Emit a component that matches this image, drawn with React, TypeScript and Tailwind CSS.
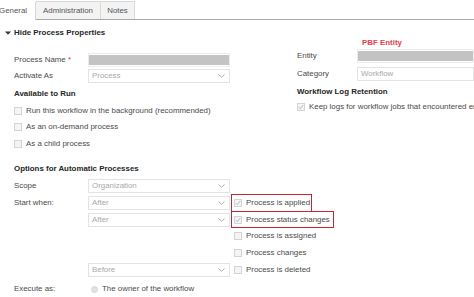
import React from "react";

const font = { fontFamily: '"Liberation Sans", Arial, sans-serif' };

function Chevron() {
  return (
    <svg width="7" height="4" viewBox="0 0 7 4" className="shrink-0">
      <path d="M0.5 0.5 L3.5 3.3 L6.5 0.5" fill="none" stroke="#9a9a9a" strokeWidth="0.8" />
    </svg>
  );
}

function SelectBox({ value, width = "w-[142px]" }: { value: string; width?: string }) {
  return (
    <div
      className={`${width} h-[14px] border border-[#e3e3e3] bg-white flex items-center justify-between pl-[3px] pr-[4px] text-[#a8a8a8]`}
    >
      <span>{value}</span>
      <Chevron />
    </div>
  );
}

function Redacted({ width }: { width: string }) {
  return (
    <div className={`${width} h-[14px] border border-[#ececec] bg-white flex items-center`}>
      <div className="w-full h-[10px] bg-[#c3c3c3]" />
    </div>
  );
}

function Checkbox({ checked = false }: { checked?: boolean }) {
  return (
    <span className="w-[8px] h-[8px] shrink-0 border border-[#d4d4d4] bg-[#f4f4f4] flex items-center justify-center">
      {checked && (
        <svg width="6" height="6" viewBox="0 0 6 6">
          <path d="M0.8 3.2 L2.3 4.7 L5.2 1.2" fill="none" stroke="#b5b5b5" strokeWidth="1" />
        </svg>
      )}
    </span>
  );
}

function CheckRow({ label, checked = false, className = "" }: { label: string; checked?: boolean; className?: string }) {
  return (
    <div className={`h-[14px] flex items-center gap-[4px] whitespace-nowrap ${className}`}>
      <Checkbox checked={checked} />
      <span>{label}</span>
    </div>
  );
}

interface TriggerRow {
  label?: string;
  select?: string;
  check: string;
  checked?: boolean;
  boxed?: string;
}

const triggers: TriggerRow[] = [
  { label: "Start when:", select: "After", check: "Process is applied", checked: true, boxed: "w-[81px] h-[18px]" },
  { select: "After", check: "Process status changes", checked: true, boxed: "w-[103px] h-[17px]" },
  { check: "Process is assigned" },
  { check: "Process changes" },
  { select: "Before", check: "Process is deleted" },
];

export default function App() {
  return (
    <div
      className="w-[474px] h-[297px] overflow-hidden bg-white text-[7.9px] leading-none text-[#4a4a4a]"
      style={font}
    >
      {/* tabs */}
      <div className="h-[20px] flex items-end border-b border-[#a9a9a9]">
        <div className="w-[36px] h-[18px] bg-white flex items-center border-r border-[#d6d6d6] -mb-px text-[#555] overflow-hidden">
          <span className="-ml-[1px]">General</span>
        </div>
        <div className="w-[65px] h-[18px] bg-[#f3f3f3] border-t border-r border-[#d9d9d9] flex items-center justify-center text-[#555]">
          Administration
        </div>
        <div className="w-[34px] h-[18px] bg-[#f3f3f3] border-t border-r border-[#d9d9d9] flex items-center justify-center text-[#555]">
          Notes
        </div>
      </div>

      {/* section header */}
      <div className="h-[13px] mt-[6px] flex items-center pl-[5px] gap-[3px] font-bold text-[#262626]">
        <svg width="6" height="4" viewBox="0 0 6 4">
          <path d="M0 0.5 L6 0.5 L3 3.8 Z" fill="#333" />
        </svg>
        <span>Hide Process Properties</span>
      </div>

      {/* two columns */}
      <div className="flex">
        <div className="w-[297px] shrink-0 pl-[14px] pt-[12px]">
          <div className="h-[17px] flex items-center">
            <span className="w-[74px]">
              Process Name <span className="text-[#d4213d]">*</span>
            </span>
            <Redacted width="w-[142px]" />
          </div>
          <div className="h-[14px] mt-[1px] flex items-center">
            <span className="w-[74px]">Activate As</span>
            <SelectBox value="Process" />
          </div>
          <div className="h-[14px] mt-[4px] flex items-center font-bold text-[#262626]">Available to Run</div>
          <CheckRow label="Run this workflow in the background (recommended)" className="mt-[3px]" />
          <CheckRow label="As an on-demand process" className="mt-[2px]" />
          <CheckRow label="As a child process" className="mt-[3px]" />
        </div>

        <div className="flex-1 min-w-0">
          <div className="h-[7px] flex items-center pl-[65px] font-bold text-[#e5404d] whitespace-nowrap">PBF Entity</div>
          <div className="h-[14px] mt-[3px] flex items-center">
            <span className="w-[60px] shrink-0">Entity</span>
            <Redacted width="flex-1" />
          </div>
          <div className="h-[14px] mt-[4px] flex items-center">
            <span className="w-[60px] shrink-0">Category</span>
            <div className="flex-1 h-[14px] border border-[#e3e3e3] flex items-center pl-[3px] text-[#a8a8a8]">Workflow</div>
          </div>
          <div className="h-[14px] mt-[4px] flex items-center font-bold text-[#262626] whitespace-nowrap">Workflow Log Retention</div>
          <CheckRow label="Keep logs for workflow jobs that encountered errors" checked className="mt-[1px]" />
        </div>
      </div>

      {/* automatic processes */}
      <div className="pl-[14px]">
        <div className="h-[14px] mt-[11px] flex items-center font-bold text-[#262626]">Options for Automatic Processes</div>
        <div className="h-[14px] mt-[3px] flex items-center">
          <span className="w-[74px]">Scope</span>
          <SelectBox value="Organization" />
        </div>
        <div className="mt-[1.5px]">
          {triggers.map((t, i) => (
            <div key={i} className="h-[16.75px] flex items-center">
              <span className="w-[74px] shrink-0">{t.label}</span>
              <div className="w-[142px] shrink-0">{t.select && <SelectBox value={t.select} />}</div>
              <div
                className={`ml-[1px] flex items-center gap-[4px] pl-[2px] whitespace-nowrap ${
                  t.boxed ? `${t.boxed} border-[1.5px] border-[#d0222e]` : "border-[1.5px] border-transparent"
                }`}
              >
                <Checkbox checked={t.checked} />
                <span>{t.check}</span>
              </div>
            </div>
          ))}
        </div>
        <div className="h-[14px] mt-[4px] flex items-center">
          <span className="w-[77px]">Execute as:</span>
          <span className="w-[7px] h-[7px] rounded-full bg-[#e2e2e2] border border-[#d6d6d6]" />
          <span className="ml-[4px]">The owner of the workflow</span>
        </div>
      </div>
    </div>
  );
}
